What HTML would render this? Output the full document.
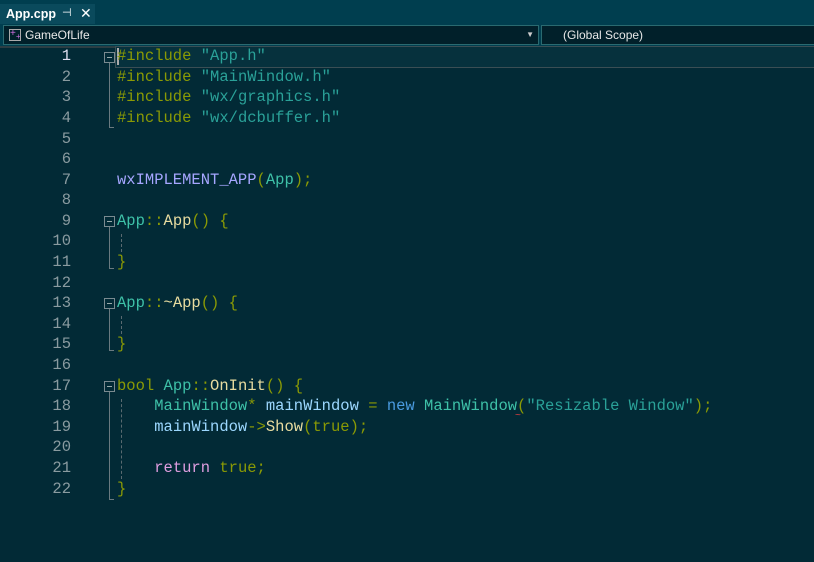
<!DOCTYPE html>
<html><head><meta charset="utf-8"><style>
body{margin:0;width:814px;height:560px;overflow:hidden;background:#022a36;font-family:"Liberation Sans",sans-serif}
.tabs{position:absolute;left:0;top:0;width:814px;height:24px;background:#003e4f}
.tab{position:absolute;left:0;top:4px;width:95px;height:20px;background:#0a4a5c;color:#fff;font-size:12.5px;font-weight:bold}
.bar{position:absolute;left:0;top:24px;width:814px;height:22px;background:#003e4f}
.combo{position:absolute;top:1px;height:18px;background:#01202a;border:1px solid #2a6a70;color:#e8e8e8;font-size:12px;line-height:18px}
.ed{position:absolute;left:0;top:46px;width:814px;height:514px;background:#022a36;border-top:2px solid #2c3e44}
.ln{position:absolute;left:0;width:71px;text-align:right;color:#8a9ba0;font:15.5px "Liberation Mono","DejaVu Sans Mono",monospace}
.c{position:absolute;left:117px;white-space:pre;font:15.5px "Liberation Mono","DejaVu Sans Mono",monospace;color:#c8d0d0}
.k{color:#8a9a05}.s{color:#2aa198}.t{color:#3ec1a8}.v{color:#9cd7fe}.f{color:#e8dca0}.m{color:#a6a6ff}.b{color:#4a9be0}.r{color:#e09ee0}.p{color:#8a9a05}
.fold{position:absolute;left:104px;width:9px;height:9px;border:1px solid #7a8a90}
.fold:after{content:"";position:absolute;left:2px;top:4px;width:5px;height:1px;background:#9aa}
.vl{position:absolute;left:109px;width:1px;background:#6a7a80}
.tk{position:absolute;left:109px;width:5px;height:1px;background:#6a7a80}
.dl{position:absolute;left:121px;width:0;border-left:1px dashed #5a6a70}
</style></head><body>
<div class="tabs"><div class="tab"><span style="position:absolute;left:6px;top:3px">App.cpp</span><span style="position:absolute;left:62px;top:2px;font-weight:normal;font-size:11px">⊣</span><span style="position:absolute;left:80px;top:1px;font-weight:normal;font-size:14px">✕</span></div></div>
<div class="bar">
<div class="combo" style="left:3px;width:534px"><span style="position:absolute;left:5px;top:3px;width:10px;height:10px;border:1px solid #aaa"></span><span style="position:absolute;left:6px;top:-1px;color:#d070e0;font-size:10px">+<sub>+</sub></span><span style="position:absolute;left:21px">GameOfLife</span><span style="position:absolute;right:4px;top:0;font-size:8px;color:#ccc">▼</span></div>
<div class="combo" style="left:541px;width:273px"><span style="position:absolute;left:21px">(Global Scope)</span></div>
</div>
<div class="ed"></div>
<div style="position:absolute;left:115px;top:46px;width:699px;height:20px;border:1px solid #3a4e54;border-right:none;background:#06313d"></div>
<div style="position:absolute;left:117px;top:48px;width:2px;height:17px;background:#aaa"></div>

<div class="ln" style="top:47px;color:#dde">1</div><div class="ln" style="top:68px">2</div><div class="ln" style="top:88px">3</div><div class="ln" style="top:109px">4</div><div class="ln" style="top:130px">5</div><div class="ln" style="top:150px">6</div><div class="ln" style="top:171px">7</div>
<div class="ln" style="top:191px">8</div><div class="ln" style="top:212px">9</div><div class="ln" style="top:232px">10</div><div class="ln" style="top:253px">11</div><div class="ln" style="top:274px">12</div><div class="ln" style="top:294px">13</div><div class="ln" style="top:315px">14</div><div class="ln" style="top:335px">15</div><div class="ln" style="top:356px">16</div><div class="ln" style="top:377px">17</div><div class="ln" style="top:397px">18</div><div class="ln" style="top:418px">19</div><div class="ln" style="top:438px">20</div><div class="ln" style="top:459px">21</div><div class="ln" style="top:480px">22</div>

<div class="fold" style="top:52px"></div><div class="vl" style="top:63px;height:64px"></div><div class="tk" style="top:127px"></div>
<div class="fold" style="top:216px"></div><div class="vl" style="top:227px;height:41px"></div><div class="tk" style="top:268px"></div>
<div class="fold" style="top:298px"></div><div class="vl" style="top:309px;height:41px"></div><div class="tk" style="top:350px"></div>
<div class="fold" style="top:381px"></div><div class="vl" style="top:392px;height:107px"></div><div class="tk" style="top:499px"></div>
<div class="dl" style="top:234px;height:18px"></div><div class="dl" style="top:316px;height:18px"></div><div class="dl" style="top:399px;height:80px"></div>

<div class="c" style="top:47px"><span class="k">#include</span> <span class="s">"App.h"</span></div>
<div class="c" style="top:68px"><span class="k">#include</span> <span class="s">"MainWindow.h"</span></div>
<div class="c" style="top:88px"><span class="k">#include</span> <span class="s">"wx/graphics.h"</span></div>
<div class="c" style="top:109px"><span class="k">#include</span> <span class="s">"wx/dcbuffer.h"</span></div>
<div class="c" style="top:171px"><span class="m">wxIMPLEMENT_APP</span><span class="p">(</span><span class="t">App</span><span class="p">);</span></div>
<div class="c" style="top:212px"><span class="t">App</span><span class="p">::</span><span class="f">App</span><span class="p">() {</span></div>
<div class="c" style="top:253px"><span class="p">}</span></div>
<div class="c" style="top:294px"><span class="t">App</span><span class="p">::</span><span class="f">~App</span><span class="p">() {</span></div>
<div class="c" style="top:335px"><span class="p">}</span></div>
<div class="c" style="top:377px"><span class="k">bool</span> <span class="t">App</span><span class="p">::</span><span class="f">OnInit</span><span class="p">() {</span></div>
<div class="c" style="top:397px">    <span class="t">MainWindow</span><span class="p">*</span> <span class="v">mainWindow</span> <span class="p">=</span> <span class="b">new</span> <span class="t">MainWindow</span><span class="p">(</span><span class="s">"Resizable Window"</span><span class="p">);</span></div>
<div class="c" style="top:418px">    <span class="v">mainWindow</span><span class="p">-&gt;</span><span class="f">Show</span><span class="p">(true);</span></div>
<div class="c" style="top:459px">    <span class="r">return</span> <span class="k">true;</span></div>
<div class="c" style="top:480px"><span class="p">}</span></div>
<div style="position:absolute;left:515px;top:410px;color:#e04040;font-size:10px">~</div>
</body></html>
